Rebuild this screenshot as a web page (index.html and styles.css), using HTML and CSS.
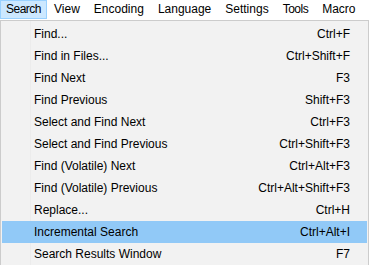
FILE: index.html
```html
<!DOCTYPE html>
<html>
<head>
<meta charset="utf-8">
<link rel="stylesheet" href="styles.css">
</head>
<body>
<div class="bar">
  <span class="top active tight">Search</span>
  <span class="top">View</span>
  <span class="top">Encoding</span>
  <span class="top">Language</span>
  <span class="top">Settings</span>
  <span class="top tight">Tools</span>
  <span class="top">Macro</span>
</div>
<div class="menu">
  <div class="item"><span class="label">Find...</span><span class="key">Ctrl+F</span></div>
  <div class="item"><span class="label">Find in Files...</span><span class="key">Ctrl+Shift+F</span></div>
  <div class="item"><span class="label">Find Next</span><span class="key">F3</span></div>
  <div class="item"><span class="label">Find Previous</span><span class="key">Shift+F3</span></div>
  <div class="item"><span class="label">Select and Find Next</span><span class="key">Ctrl+F3</span></div>
  <div class="item"><span class="label">Select and Find Previous</span><span class="key">Ctrl+Shift+F3</span></div>
  <div class="item"><span class="label">Find (Volatile) Next</span><span class="key">Ctrl+Alt+F3</span></div>
  <div class="item"><span class="label">Find (Volatile) Previous</span><span class="key">Ctrl+Alt+Shift+F3</span></div>
  <div class="item"><span class="label">Replace...</span><span class="key">Ctrl+H</span></div>
  <div class="item hot"><span class="label">Incremental Search</span><span class="key">Ctrl+Alt+I</span></div>
  <div class="item"><span class="label">Search Results Window</span><span class="key">F7</span></div>
</div>
</body>
</html>
```
FILE: styles.css
```css
html, body {
  margin: 0;
  padding: 0;
  background: #ffffff;
  width: 370px;
  height: 265px;
  overflow: hidden;
  font-family: "Liberation Sans", Arial, sans-serif;
  font-size: 12px;
  color: #000;
}
.bar {
  height: 20px;
  display: flex;
  align-items: flex-start;
  background: #fff;
}
.top {
  height: 19px;
  line-height: 17px;
  padding: 0 6px;
  border: 1px solid transparent;
  box-sizing: border-box;
}
.top.tight {
  letter-spacing: -0.5px;
}
.top.active {
  background: #cce8ff;
  border-color: #99d1ff;
  padding: 0 5px;
}
.menu {
  width: 369px;
  box-sizing: border-box;
  background: #f2f2f2;
  border: 1px solid #cccccc;
  padding: 2px 1px;
  position: relative;
}
.menu::before {
  content: "";
  position: absolute;
  left: 29px;
  top: 0;
  bottom: 0;
  width: 1px;
  background: #ececec;
}
.item {
  height: 22px;
  display: flex;
  align-items: center;
  justify-content: space-between;
  padding: 0 17px 0 32px;
  position: relative;
}
.item.hot {
  background: #91c9f7;
}
```
